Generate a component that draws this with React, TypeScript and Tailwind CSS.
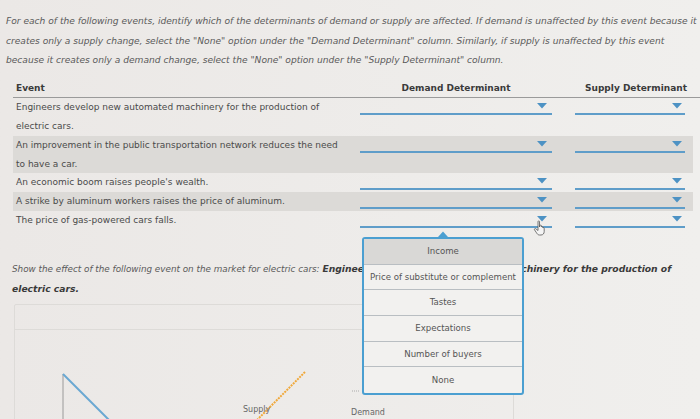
import React from "react";

const Dropdown = ({ w, pr }: { w: string; pr: string }) => (
  <div className={`${w} h-[17px] border-b-2 border-[#5f9dc9] flex justify-end items-start ${pr}`}>
    <svg width="10" height="6" viewBox="0 0 10 6" className="mt-[5px]">
      <polygon points="0,0 10,0 5,5.5" fill="#4d92c4" />
    </svg>
  </div>
);

const rows: { text: React.ReactNode; h: string; gray: boolean }[] = [
  {
    text: (
      <>
        Engineers develop new automated machinery for the production of
        <br />
        electric cars.
      </>
    ),
    h: "h-[38px]",
    gray: false,
  },
  {
    text: (
      <>
        An improvement in the public transportation network reduces the need
        <br />
        to have a car.
      </>
    ),
    h: "h-[37px]",
    gray: true,
  },
  { text: "An economic boom raises people's wealth.", h: "h-[19px]", gray: false },
  { text: "A strike by aluminum workers raises the price of aluminum.", h: "h-[19px]", gray: true },
  { text: "The price of gas-powered cars falls.", h: "h-[19px]", gray: false },
];

const options = [
  "Income",
  "Price of substitute or complement",
  "Tastes",
  "Expectations",
  "Number of buyers",
  "None",
];

export default function App() {
  return (
    <div className="relative w-[700px] h-[419px] overflow-hidden bg-gradient-to-r from-[#ebe8e6] to-[#f0efed] font-['DejaVu_Sans',sans-serif] text-[#4f4f4f]">
      {/* Intro */}
      <p className="pt-[12px] pl-[6px] text-[9.1px] leading-[19.5px] italic text-[#5a5a5a] whitespace-nowrap">
        For each of the following events, identify which of the determinants of demand or supply are affected. If demand is unaffected by this event because it
        <br />
        creates only a supply change, select the "None" option under the "Demand Determinant" column. Similarly, if supply is unaffected by this event
        <br />
        because it creates only a demand change, select the "None" option under the "Supply Determinant" column.
      </p>

      {/* Table */}
      <div className="ml-[13px] mt-[10px] w-[687px] text-[9px]">
        <div className="flex h-[17px] items-center border-b-[1.5px] border-[#9a9a9a] font-bold text-[#3a3a3a]">
          <div className="w-[347px] pl-[3px]">Event</div>
          <div className="w-[192px] text-center">Demand Determinant</div>
          <div className="w-[23px]" />
          <div className="w-[122px] text-center">Supply Determinant</div>
        </div>
        {rows.map((r, i) => (
          <div
            key={i}
            className={`flex w-[680px] ${r.h} ${r.gray ? "bg-[#dcdad7]" : ""}`}
          >
            <div className="w-[347px] pl-[3px] leading-[19px] text-[#4a4a4a]">{r.text}</div>
            <Dropdown w="w-[192px]" pr="pr-[5px]" />
            <div className="w-[23px]" />
            <Dropdown w="w-[110px]" pr="pr-[3px]" />
          </div>
        ))}
      </div>

      {/* Show effect */}
      <p className="mt-[29px] ml-[12px] w-[670px] text-[8.8px] leading-[19px] italic text-[#5a5a5a]">
        Show the effect of the following event on the market for electric cars:{" "}
        <span className="font-bold text-[9.2px] text-[#3a3a3a]">
          Engineers develop new automated machinery for the production of electric cars.
        </span>
      </p>

      {/* Graph box */}
      <div className="mt-[5px] ml-[14px] w-[500px] h-[140px] border border-[#dddbd8] rounded-[2px]">
        <div className="h-[25px] border-b border-[#dddbd8]" />
        <svg width="500" height="110" viewBox="0 0 500 110" className="block">
          <line x1="48" y1="44" x2="48" y2="110" stroke="#9a9a9a" strokeWidth="1" />
          <line x1="48" y1="44" x2="100" y2="96" stroke="#6aa8d2" strokeWidth="2" />
          <line x1="290" y1="42" x2="236" y2="96" stroke="#f0a93c" strokeWidth="2" strokeDasharray="2 1" />
          <line x1="337" y1="61" x2="344" y2="61" stroke="#aaa" strokeWidth="1" strokeDasharray="1 1" />
          <text x="228" y="82" fontSize="8" fill="#666" fontFamily="DejaVu Sans">Supply</text>
          <text x="336" y="85" fontSize="8" fill="#666" fontFamily="DejaVu Sans">Demand</text>
        </svg>
      </div>

      {/* Cursor */}
      <svg className="absolute left-[533px] top-[220px]" width="14" height="16" viewBox="0 0 14 16">
        <path d="M5 1.5 C5 0.8 6.5 0.8 6.5 1.5 L6.5 7 L7 5.5 C7.2 4.8 8.4 4.9 8.4 5.8 L8.4 7 C8.6 6.3 9.8 6.4 9.8 7.2 L9.8 8 C10 7.4 11.2 7.5 11.2 8.3 L11.2 11.5 C11.2 13.5 10 15 8 15 L6.5 15 C5 15 4.3 14 3.5 12.8 L1.5 9.8 C1 9 2 8.2 2.8 8.8 L5 10.5 Z" fill="#f4f4f4" stroke="#555" strokeWidth="0.8" />
      </svg>

      {/* Popup */}
      <div className="absolute left-[362px] top-[231px] flex flex-col items-center">
        <svg width="10" height="6" viewBox="0 0 10 6">
          <polygon points="0,6 5,0.5 10,6" fill="#4b9fd1" />
        </svg>
        <div className="w-[162px] border-2 border-[#4b9fd1] rounded-[3px] bg-[#f2f1ef] text-[8.6px] text-[#555]">
          {options.map((o, i) => (
            <div
              key={o}
              className={`h-[25.7px] flex items-center justify-center ${i === 0 ? "bg-[#d9d8d6]" : ""} ${i < options.length - 1 ? "border-b border-[#b9bec2]" : ""}`}
            >
              {o}
            </div>
          ))}
        </div>
      </div>
    </div>
  );
}
